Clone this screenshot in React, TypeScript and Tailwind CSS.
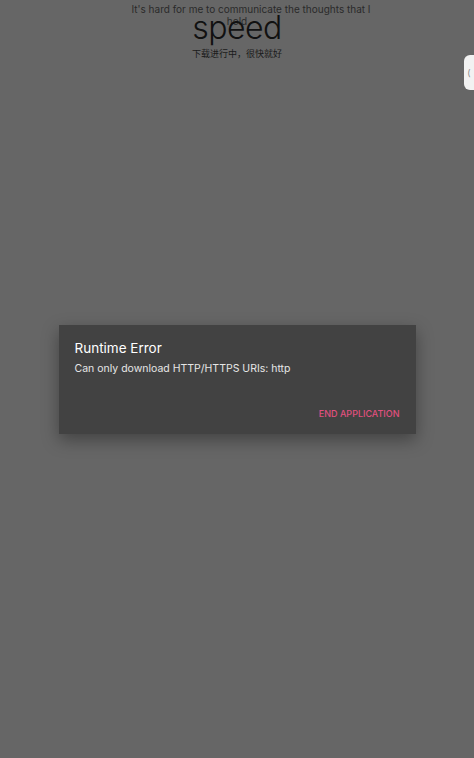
import React from 'react';

const SideTab = () => (
  <div className="absolute right-0 top-[55px] flex h-[35px] w-[10px] items-center justify-center rounded-l-[6px] bg-[#f2f2f2]">
    <span className="text-[9px] leading-none text-[#888]">(</span>
  </div>
);

export default function App() {
  return (
    <div
      className="relative flex h-[758px] w-full flex-col items-center bg-[#666666]"
      style={{ fontFamily: 'Inter, "Noto Sans CJK SC", sans-serif' }}
    >
      <p className="mt-[3px] w-[272px] indent-[28px] text-center text-[10px] leading-[12px] text-[#2a2a2a]">
        It's hard for me to communicate the thoughts that I hold
      </p>
      <h1 className="-mt-[16px] text-[32px] font-light leading-[34px] tracking-[-0.5px] text-[#111]">speed</h1>
      <p className="mt-[3px] text-[9px] leading-[12px] text-[#1a1a1a]">下载进行中，很快就好</p>

      <SideTab />

      <div className="mt-[265px] flex h-[109px] w-[357px] flex-col bg-[#424242] px-[16px] pt-[14px] shadow-[0_6px_16px_rgba(0,0,0,0.35)]">
        <div className="text-[13.5px] leading-[18px] text-white">Runtime Error</div>
        <div className="mt-[5px] text-[10.5px] leading-[14px] text-[#e6e6e6]">
          Can only download HTTP/HTTPS URIs: http
        </div>
        <div className="mt-auto mb-[14px] flex justify-end">
          <button className="text-[9px] font-medium uppercase text-[#e0507f]">End Application</button>
        </div>
      </div>
    </div>
  );
}
